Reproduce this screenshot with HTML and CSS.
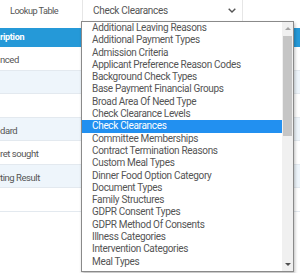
FILE: index.html
```html
<!DOCTYPE html>
<html>
<head>
<meta charset="utf-8">
<link rel="stylesheet" href="styles.css">
</head>
<body>
<div class="page">
  <div class="toolbar">
    <span class="label">Lookup Table</span>
    <div class="select">
      <span class="select-value">Check Clearances</span>
      <svg class="chev" width="8" height="5" viewBox="0 0 8 5"><path d="M0.7 0.7 L4 4 L7.3 0.7" fill="none" stroke="#555" stroke-width="1.4"/></svg>
    </div>
  </div>
  <div class="table">
    <div class="thead">ription</div>
    <div class="row">nced</div>
    <div class="row alt"></div>
    <div class="row"></div>
    <div class="row alt">dard</div>
    <div class="row">ret sought</div>
    <div class="row alt">ting Result</div>
    <div class="row"></div>
  </div>
  <div class="dropdown">
    <ul class="options">
      <li>Additional Leaving Reasons</li>
      <li>Additional Payment Types</li>
      <li>Admission Criteria</li>
      <li>Applicant Preference Reason Codes</li>
      <li>Background Check Types</li>
      <li>Base Payment Financial Groups</li>
      <li>Broad Area Of Need Type</li>
      <li>Check Clearance Levels</li>
      <li class="selected">Check Clearances</li>
      <li>Committee Memberships</li>
      <li>Contract Termination Reasons</li>
      <li>Custom Meal Types</li>
      <li>Dinner Food Option Category</li>
      <li>Document Types</li>
      <li>Family Structures</li>
      <li>GDPR Consent Types</li>
      <li>GDPR Method Of Consents</li>
      <li>Illness Categories</li>
      <li>Intervention Categories</li>
      <li>Meal Types</li>
    </ul>
    <div class="scrollbar">
      <span class="arrow up"></span>
      <span class="track"><span class="thumb"></span></span>
      <span class="arrow down"></span>
    </div>
  </div>
</div>
</body>
</html>
```
FILE: styles.css
```css
html, body {
  margin: 0;
  padding: 0;
  background: #fff;
}
body {
  font-family: Roboto, "Liberation Sans", sans-serif;
  color: #555;
  width: 300px;
  height: 273px;
  overflow: hidden;
}
.page {
  position: relative;
  width: 300px;
  height: 273px;
}
.toolbar {
  height: 28px;
  display: flex;
  align-items: flex-start;
}
.label {
  width: 72px;
  padding-left: 10px;
  font-size: 9.2px;
  letter-spacing: -0.55px;
  line-height: 21px;
  color: #555;
}
.select {
  box-sizing: border-box;
  width: 161px;
  height: 22px;
  border: 1px solid #e6e6e6;
  border-top: none;
  display: flex;
  align-items: center;
  justify-content: space-between;
  padding: 0 6px 0 10px;
  font-size: 10px;
  letter-spacing: -0.3px;
  color: #555;
}
.chev {
  display: block;
  margin-top: -1px;
}
.table {
  display: flex;
  flex-direction: column;
}
.thead {
  height: 19px;
  line-height: 19px;
  background: #2599d8;
  color: #fff;
  font-weight: 700;
  font-size: 9px;
  letter-spacing: -0.3px;
}
.row {
  height: 23.5px;
  box-sizing: border-box;
  border-bottom: 1px solid #e3e9ef;
  line-height: 25px;
  font-size: 9.5px;
  letter-spacing: -0.45px;
  color: #555;
}
.row.alt {
  background: #eef5fb;
}
.dropdown {
  position: absolute;
  left: 81px;
  top: 21px;
  width: 213px;
  height: 251px;
  box-sizing: border-box;
  border: 1px solid #8a8a8a;
  background: #fff;
  box-shadow: 1px 2px 3px rgba(0,0,0,0.25);
  display: flex;
}
.options {
  list-style: none;
  margin: 0;
  padding: 0;
  flex: 1;
  overflow: hidden;
}
.options li {
  height: 12.3px;
  line-height: 12.3px;
  font-size: 10px;
  letter-spacing: -0.32px;
  padding-left: 10px;
  color: #555;
  white-space: nowrap;
}
.options li.selected {
  background: #2290f0;
  color: #fff;
}
.scrollbar {
  width: 11px;
  background: #f0f0f0;
  display: flex;
  flex-direction: column;
  align-items: center;
}
.arrow {
  width: 0;
  height: 0;
  border-left: 3px solid transparent;
  border-right: 3px solid transparent;
  margin: 5px 0;
}
.arrow.up {
  border-bottom: 3px solid #a3a3a3;
}
.arrow.down {
  border-top: 3px solid #505050;
}
.track {
  flex: 1;
  width: 100%;
  display: flex;
  flex-direction: column;
}
.thumb {
  height: 100px;
  margin: 1px 1px 0;
  background: #c5c5c5;
}
```
